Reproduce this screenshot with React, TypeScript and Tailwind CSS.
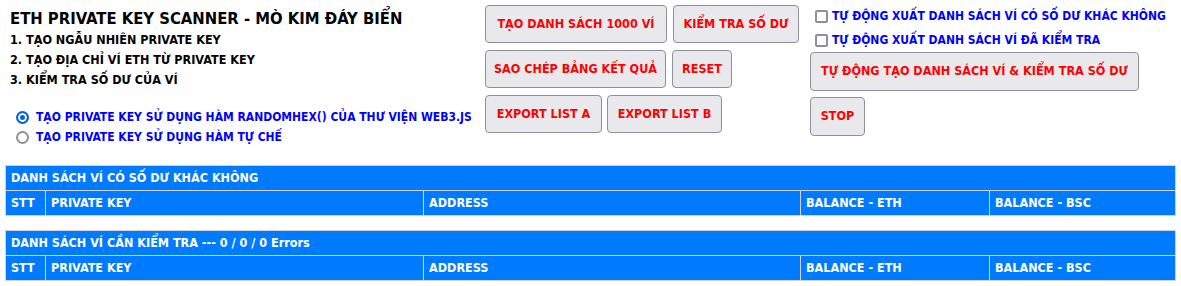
import { useState } from 'react';

const font = 'font-["DejaVu_Sans_Condensed","DejaVu_Sans",sans-serif]';

const radioCls =
  'm-0 h-[13px] w-[13px] shrink-0 appearance-none rounded-full border-2 border-[#8f8f9d] bg-white checked:border-[#0060df] checked:bg-[#0060df] checked:shadow-[inset_0_0_0_2px_white]';
const checkCls =
  'm-0 h-[13px] w-[13px] shrink-0 appearance-none rounded-[2px] border-2 border-[#8f8f9d] bg-white checked:border-[#0060df] checked:bg-[#0060df]';

function Btn({ label, w, h = 'h-[38px]' }: { label: string; w: string; h?: string }) {
  return (
    <button
      className={`${w} ${h} shrink-0 whitespace-nowrap rounded-[4px] border border-[#8f8f9d] bg-[#e9e9ed] text-[12.5px] font-bold text-[#ff0000] hover:bg-[#d0d0d7]`}
    >
      {label}
    </button>
  );
}

function WalletTable({ title }: { title: string }) {
  const cols = ['STT', 'PRIVATE KEY', 'ADDRESS', 'BALANCE - ETH', 'BALANCE - BSC'];
  return (
    <table className="w-full table-fixed border-collapse text-[12.5px] font-bold text-white">
      <colgroup>
        <col className="w-[40px]" />
        <col className="w-[378px]" />
        <col className="w-[377px]" />
        <col className="w-[189px]" />
        <col />
      </colgroup>
      <thead>
        <tr className="h-[25px] bg-[#007bff]">
          <th colSpan={5} className="border border-[#cfd4da] px-[5px] text-left">
            {title}
          </th>
        </tr>
        <tr className="h-[25px] bg-[#007bff]">
          {cols.map((c) => (
            <th key={c} className="border border-[#cfd4da] px-[5px] text-left">
              {c}
            </th>
          ))}
        </tr>
      </thead>
    </table>
  );
}

export default function App() {
  const [mode, setMode] = useState('web3');
  return (
    <div className={`${font} h-[286px] w-[1181px] overflow-hidden bg-white`}>
      <div className="flex pt-[5px]">
        {/* left: title + steps + options */}
        <div className="w-[485px] shrink-0 pl-[10px] pt-[4px]">
          <h1 className="whitespace-nowrap text-[16.5px] font-bold leading-[20px] text-black">
            ETH PRIVATE KEY SCANNER - MÒ KIM ĐÁY BIỂN
          </h1>
          <ol className="mt-[1px] whitespace-nowrap text-[12.5px] font-bold leading-[20px] text-black">
            <li>1. TẠO NGẪU NHIÊN PRIVATE KEY</li>
            <li>2. TẠO ĐỊA CHỈ VÍ ETH TỪ PRIVATE KEY</li>
            <li>3. KIỂM TRA SỐ DƯ CỦA VÍ</li>
          </ol>
          <div className="mt-[18px] flex flex-col gap-[1px] whitespace-nowrap pl-[6px] text-[12px] font-bold leading-[19px] text-[#0000ff]">
            <label className="flex items-center gap-[7px]">
              <input
                type="radio"
                name="mode"
                checked={mode === 'web3'}
                onChange={() => setMode('web3')}
                className={radioCls}
              />
              TẠO PRIVATE KEY SỬ DỤNG HÀM RANDOMHEX() CỦA THƯ VIỆN WEB3.JS
            </label>
            <label className="flex items-center gap-[7px]">
              <input
                type="radio"
                name="mode"
                checked={mode === 'custom'}
                onChange={() => setMode('custom')}
                className={radioCls}
              />
              TẠO PRIVATE KEY SỬ DỤNG HÀM TỰ CHẾ
            </label>
          </div>
        </div>

        {/* middle: action buttons */}
        <div className="flex w-[314px] shrink-0 flex-col gap-[7px]">
          <div className="flex gap-[6px]">
            <Btn label="TẠO DANH SÁCH 1000 VÍ" w="w-[182px]" />
            <Btn label="KIỂM TRA SỐ DƯ" w="w-[126px]" />
          </div>
          <div className="flex gap-[6px]">
            <Btn label="SAO CHÉP BẢNG KẾT QUẢ" w="w-[181px]" />
            <Btn label="RESET" w="w-[60px]" />
          </div>
          <div className="flex gap-[5px]">
            <Btn label="EXPORT LIST A" w="w-[117px]" />
            <Btn label="EXPORT LIST B" w="w-[115px]" />
          </div>
        </div>

        {/* right: auto options */}
        <div className="ml-[11px] flex flex-col">
          <div className="flex flex-col gap-[6px] whitespace-nowrap pl-[5px] pt-[2px] text-[12px] font-bold leading-[18px] text-[#0000ff]">
            <label className="flex items-center gap-[4px]">
              <input type="checkbox" className={checkCls} />
              TỰ ĐỘNG XUẤT DANH SÁCH VÍ CÓ SỐ DƯ KHÁC KHÔNG
            </label>
            <label className="flex items-center gap-[4px]">
              <input type="checkbox" className={checkCls} />
              TỰ ĐỘNG XUẤT DANH SÁCH VÍ ĐÃ KIỂM TRA
            </label>
          </div>
          <div className="mt-[3px]">
            <Btn label="TỰ ĐỘNG TẠO DANH SÁCH VÍ & KIỂM TRA SỐ DƯ" w="w-[329px]" h="h-[39px]" />
          </div>
          <div className="mt-[6px]">
            <Btn label="STOP" w="w-[55px]" h="h-[39px]" />
          </div>
        </div>
      </div>

      <div className="mt-[18px] flex flex-col gap-[14px] px-[5px]">
        <WalletTable title="DANH SÁCH VÍ CÓ SỐ DƯ KHÁC KHÔNG" />
        <WalletTable title="DANH SÁCH VÍ CẦN KIỂM TRA --- 0 / 0 / 0 Errors" />
      </div>
    </div>
  );
}
